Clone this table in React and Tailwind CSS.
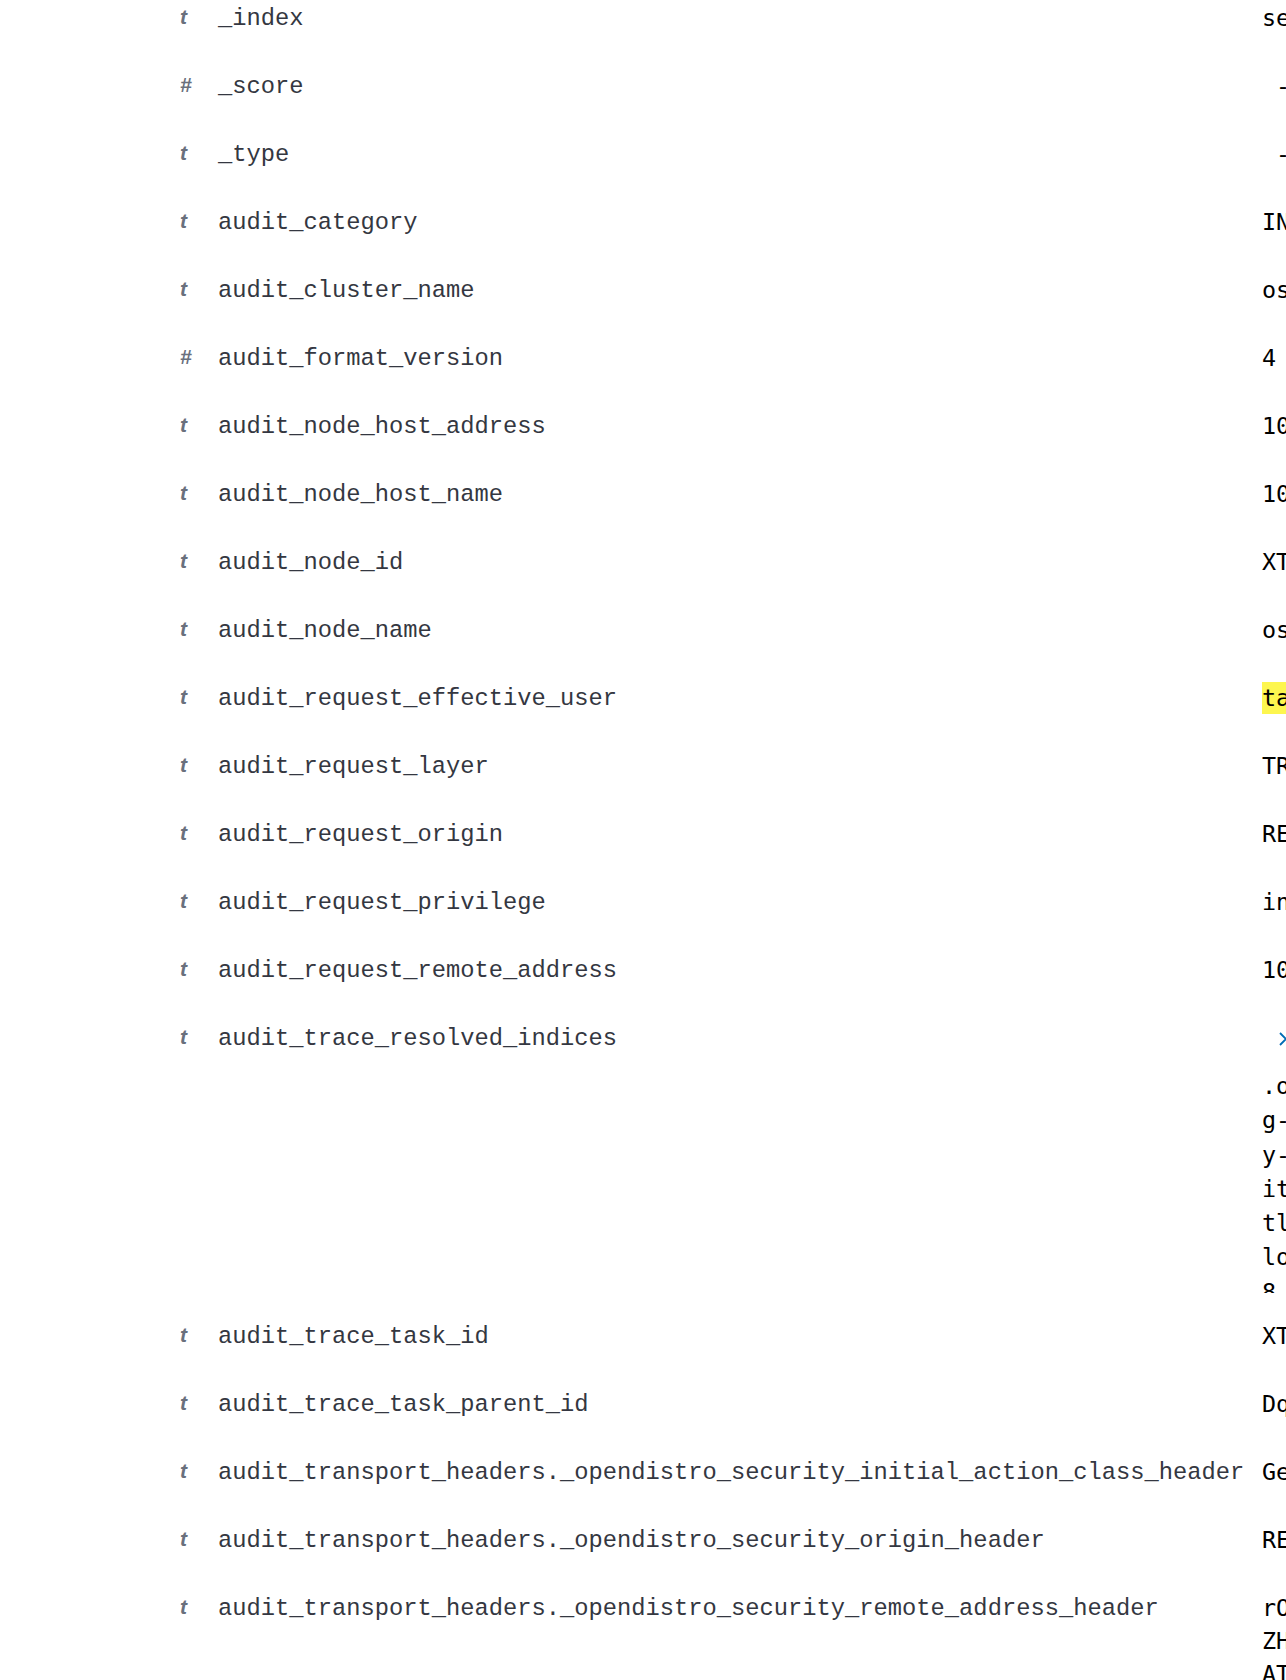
import React from "react";

const rows = [
  { t: "t", name: "_index", value: "security-auditlog-2024.05.14" },
  { t: "#", name: "_score", value: "\u00a0-" },
  { t: "t", name: "_type", value: "\u00a0-" },
  { t: "t", name: "audit_category", value: "INDEX_EVENT" },
  { t: "t", name: "audit_cluster_name", value: "os-cluster" },
  { t: "#", name: "audit_format_version", value: "4" },
  { t: "t", name: "audit_node_host_address", value: "10.0.12.34" },
  { t: "t", name: "audit_node_host_name", value: "10.0.12.34" },
  { t: "t", name: "audit_node_id", value: "XTq9sP2aQ8-mLk3vB7wZrA" },
  { t: "t", name: "audit_node_name", value: "os-node-1" },
  { t: "t", name: "audit_request_effective_user", value: "tarun", mark: true },
  { t: "t", name: "audit_request_layer", value: "TRANSPORT" },
  { t: "t", name: "audit_request_origin", value: "REST" },
  { t: "t", name: "audit_request_privilege", value: "indices:admin/get" },
  { t: "t", name: "audit_request_remote_address", value: "10.0.4.21" },
  {
    t: "t",
    name: "audit_trace_resolved_indices",
    expand: true,
    lines: [
      ".opendistro-job-schedulerin",
      "g-lock, .opendistro-ism-confi",
      "y-config, security-auditlog-",
      "it-2024.05.14, .kibana_1, .p",
      "tlugins-ml-config, .opendistr",
      "lo-alerting-config, top_quer",
      "8",
    ],
  },
  { t: "t", name: "audit_trace_task_id", value: "XTq9sP2aQ8-mLk3vB7wZrA:4821" },
  { t: "t", name: "audit_trace_task_parent_id", value: "Dq7lB0ePRiSkT2u9HnY1cw:1934" },
  {
    t: "t",
    name: "audit_transport_headers._opendistro_security_initial_action_class_header",
    value: "GetIndexRequest",
  },
  { t: "t", name: "audit_transport_headers._opendistro_security_origin_header", value: "REST" },
  {
    t: "t",
    name: "audit_transport_headers._opendistro_security_remote_address_header",
    lines: ["rO0ABXNyABpqYXZhLm5ldC5JbmV0", "ZHJlc3MAAAAAAAAAAgIAAUwA", "ATlhZGRyZXNzSG9sZGVy"],
  },
];

const nameFont = { fontFamily: '"Liberation Mono", "DejaVu Sans Mono", monospace' };
const valFont = { fontFamily: '"DejaVu Sans Mono", monospace' };

function Icon({ t }) {
  return (
    <div className="w-[40px] shrink-0 flex items-center pl-[2px] -mt-[5px]">
      <span
        className="text-[21px] font-bold italic text-[#69707d] leading-none"
        style={{ fontFamily: '"Liberation Sans", Arial, sans-serif' }}
      >
        {t}
      </span>
    </div>
  );
}

function Name({ children }) {
  return (
    <div className="w-[1044px] shrink-0 text-[23.75px] text-[#343741]" style={nameFont}>
      {children}
    </div>
  );
}

function Row({ r }) {
  if (r.expand) {
    return (
      <div className="flex h-[298px]">
        <div className="flex h-[68px] items-center">
          <Icon t={r.t} />
          <Name>{r.name}</Name>
        </div>
        <div className="w-[420px] shrink-0 pt-[17px]">
          <div className="h-[34px] flex items-center pl-[13px]">
            <svg width="16" height="16" viewBox="0 0 16 16" className="text-[#006bb4]">
              <path d="M5 2l6 6-6 6" fill="none" stroke="currentColor" strokeWidth="1.8" />
            </svg>
          </div>
          <div className="mt-[13px] h-[224px] overflow-hidden text-[23.4px] text-black leading-[34.3px]" style={valFont}>
            {r.lines.map((l, i) => (
              <div key={i} className="whitespace-nowrap">
                {l}
              </div>
            ))}
          </div>
        </div>
      </div>
    );
  }
  if (r.lines) {
    return (
      <div className="flex">
        <div className="flex h-[68px] items-center">
          <Icon t={r.t} />
          <Name>{r.name}</Name>
        </div>
        <div className="w-[420px] shrink-0 pt-[17px] text-[23.4px] text-black leading-[33px]" style={valFont}>
          {r.lines.map((l, i) => (
            <div key={i} className="whitespace-nowrap">
              {l}
            </div>
          ))}
        </div>
      </div>
    );
  }
  return (
    <div className="flex h-[68px] items-center">
      <Icon t={r.t} />
      <Name>{r.name}</Name>
      <div className="w-[420px] shrink-0 text-[23.4px] text-black whitespace-pre" style={valFont}>
        {r.mark ? (
          <span className="inline-block bg-[#fdf64f] leading-[32px]">{r.value}</span>
        ) : (
          r.value
        )}
      </div>
    </div>
  );
}

export default function App() {
  return (
    <div className="w-[1286px] h-[1680px] overflow-hidden bg-white">
      <div className="-mt-[15px] pl-[178px] w-[1800px]">
        {rows.map((r, i) => (
          <Row key={i} r={r} />
        ))}
      </div>
    </div>
  );
}
